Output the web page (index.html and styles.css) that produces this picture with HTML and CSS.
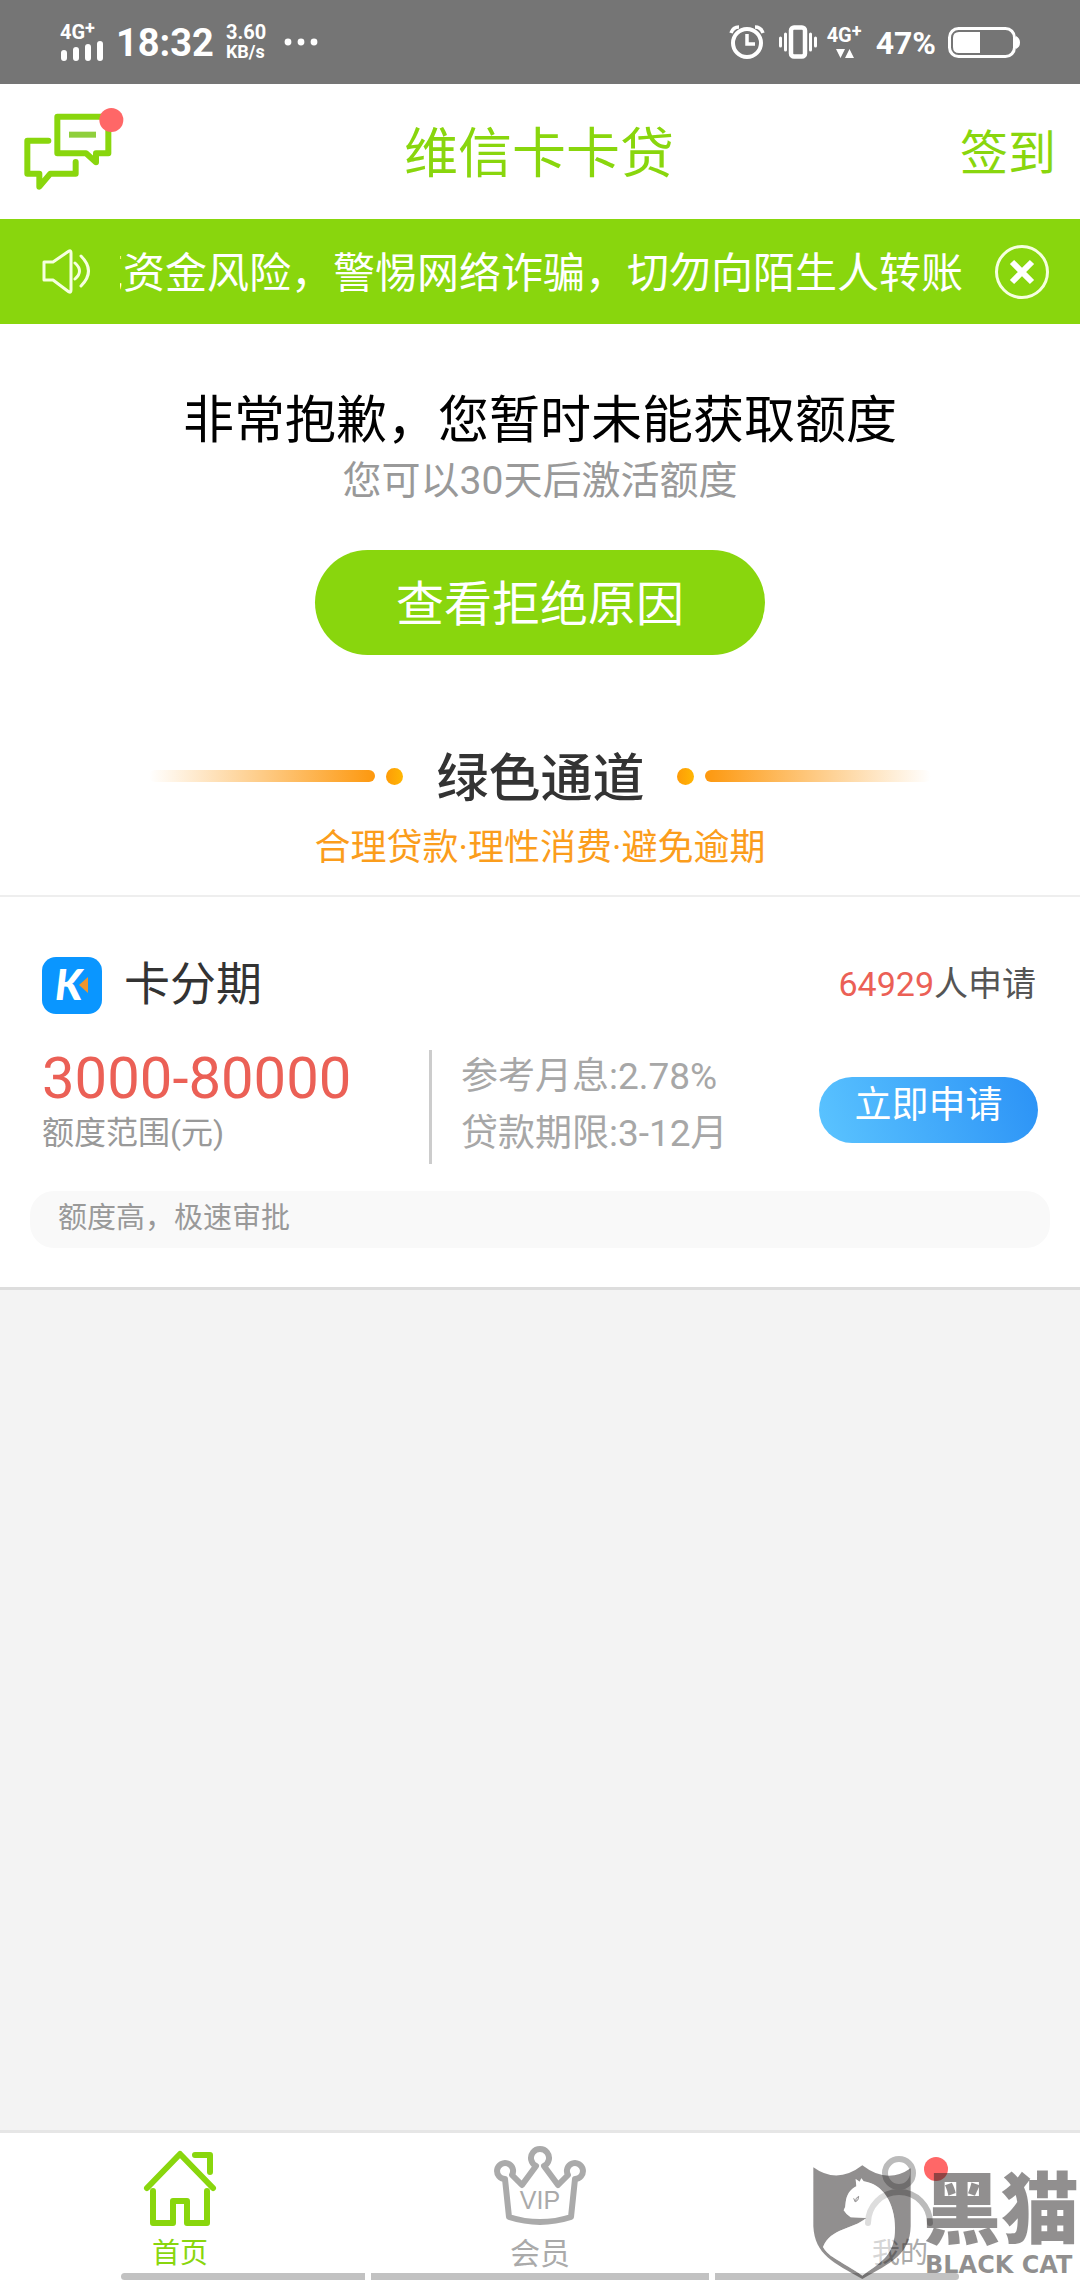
FILE: index.html
```html
<!DOCTYPE html>
<html lang="zh-CN">
<head>
<meta charset="utf-8">
<meta name="viewport" content="width=device-width, initial-scale=1">
<title>维信卡卡贷</title>
<link rel="stylesheet" href="styles.css">
</head>
<body>
<div class="app">
  <div class="status">
    <div class="status-side">
      <div class="signal">
        <span class="net">4G<sup>+</sup></span>
        <svg width="43" height="20" viewBox="0 0 43 20" stroke="#fff" stroke-width="6" stroke-linecap="round"><path d="M4 12v5M16 9v8M28 6v11M40 3v14"/></svg>
      </div>
      <span class="clock">18:32</span>
      <span class="speed"><span>3.60</span><span class="unit">KB/s</span></span>
      <svg class="dots" width="34" height="8" viewBox="0 0 34 8" fill="#fff"><circle cx="4" cy="4" r="3.4"/><circle cx="17" cy="4" r="3.4"/><circle cx="30" cy="4" r="3.4"/></svg>
    </div>
    <div class="status-side">
      <svg width="34" height="34" viewBox="0 0 34 34" fill="none" stroke="#fff" stroke-width="4"><circle cx="17" cy="18" r="14"/><path d="M17 9v10h8" stroke-width="3.5"/><path d="M1 8Q3 2 9 2M33 8Q31 2 25 2" stroke-width="3.5"/></svg>
      <svg class="vibrate" width="38" height="34" viewBox="0 0 38 34" fill="none" stroke="#fff" stroke-width="3" stroke-linecap="round"><rect x="12" y="2.500" width="14" height="29" rx="3" stroke-width="4.500"/><path d="M1.500 13v8M6.500 9v16M31.500 9v16M36.500 13v8"/></svg>
      <div class="signal">
        <span class="net">4G<sup>+</sup></span>
        <svg class="arrows" width="35" height="11" viewBox="0 0 35 11" fill="#fff"><path d="M9 1h9l-4.500 9zM18 10h9l-4.500-9z"/></svg>
      </div>
      <span class="percent">47%</span>
      <svg width="72" height="31" viewBox="0 0 72 31"><rect x="1.500" y="1.500" width="65" height="28" rx="9" fill="none" stroke="#fff" stroke-width="3"/><path d="M32 5H11Q5 5 5 11v9q0 6 6 6h21zM68 9q4 2 4 6.500T68 22z" fill="#fff"/></svg>
    </div>
  </div>

  <header class="header">
    <button class="icon-button messages" aria-label="消息">
      <svg width="104" height="84" viewBox="15 18 312 252" fill="none" stroke="#89d60d" stroke-width="18" stroke-linecap="round" stroke-linejoin="round"><path d="M100 122H37v99h36v39l33-39h76v-35M127 50h153v110h-37v27l-30-27h-86z"/><path d="M162 104h81" stroke="#8fcf3c" stroke-linecap="butt"/><circle cx="289" cy="60" r="36" fill="#ff6767" stroke="none"/></svg>
    </button>
    <h1 class="title">维信卡卡贷</h1>
    <a class="checkin" href="#">签到</a>
  </header>

  <div class="notice">
    <svg width="48" height="45" viewBox="0 0 48 45" fill="none" stroke="#f6ffe0" stroke-width="3" stroke-linecap="round" stroke-linejoin="round"><path d="M2 13h9L27 2q2-1 2 2v37q0 3-2 2L11 31H2zM33 14q9 8 0 16M39 7q15 15 0 30"/></svg>
    <p class="notice-text"><span>范资金风险，警惕网络诈骗，切勿向陌生人转账</span></p>
    <button class="icon-button" aria-label="关闭">
      <svg width="54" height="54" viewBox="0 0 54 54" fill="none" stroke="#f6ffe0" stroke-width="3"><circle cx="27" cy="27" r="25.500"/><path d="M17 17l20 20M37 17L17 37" stroke="#fff" stroke-width="6"/></svg>
    </button>
  </div>

  <main class="main">
    <section class="hero">
      <h2 class="hero-title">非常抱歉，您暂时未能获取额度</h2>
      <p class="hero-sub">您可以30天后激活额度</p>
      <button class="reason">查看拒绝原因</button>
      <div class="channel">
        <span class="rule"></span>
        <h2 class="channel-title">绿色通道</h2>
        <span class="rule rule-right"></span>
      </div>
      <p class="channel-sub">合理贷款·理性消费·避免逾期</p>
    </section>

    <article class="card">
      <div class="card-head">
        <svg width="60" height="57" viewBox="0 0 60 57"><rect width="60" height="57" rx="14" fill="#0a96ff"/><text x="13" y="43" class="logo-letter">K</text><path d="M46 20v16l-9-8z" fill="#ee952f"/></svg>
        <h3 class="card-name">卡分期</h3>
        <p class="applied"><span class="applied-count">64929</span>人申请</p>
      </div>
      <div class="card-body">
        <div>
          <p class="amount">3000-80000</p>
          <p class="amount-label">额度范围(元)</p>
        </div>
        <div class="terms">
          <p>参考月息:2.78%</p>
          <p>贷款期限:3-12月</p>
        </div>
        <button class="apply">立即申请</button>
      </div>
      <p class="tag">额度高，极速审批</p>
    </article>
  </main>

  <nav class="tabs">
    <a class="tab tab-active" href="#">
      <svg width="74" height="76" viewBox="0 0 74 76" fill="none" stroke="#89d60d" stroke-width="6" stroke-linecap="round" stroke-linejoin="round"><path d="M4 38L37 4l33 34M52 5h15v17M10 41v32h20V51h14v22h20V41"/></svg>
      <span>首页</span>
    </a>
    <a class="tab" href="#">
      <svg width="94" height="82" viewBox="0 0 94 82" fill="none" stroke="#aaa" stroke-width="6" stroke-linejoin="round"><path d="M12 35A8 8 0 1 1 19 31L29 41 43 22A9 9 0 1 1 51 22L65 41 75 31A8 8 0 1 1 82 35L78 73Q47 83 16 73z"/><text x="47" y="65" text-anchor="middle" class="vip">VIP</text></svg>
      <span class="tab-wide">会员</span>
    </a>
    <a class="tab" href="#">
      <svg width="74" height="76" viewBox="0 0 74 76" fill="none" stroke="#bbb" stroke-width="6" stroke-linecap="round"><circle cx="36" cy="23" r="14"/><path d="M5 73a31 31 0 0 1 62 0"/><circle cx="73" cy="19" r="12" fill="#ff6767" stroke="none"/></svg>
      <span>我的</span>
    </a>
    <div class="gesture"><i></i><i></i><i></i></div>
    <div class="watermark">
      <svg width="98" height="114" viewBox="92 136 294 342"><path fill="#231f20" fill-opacity=".5" fill-rule="evenodd" d="M93 143Q165 195 240 137Q315 195 385 146V320C383 405 325 430 240 478C155 430 97 405 93 320ZM220 178L232 186 237 176 244 185C300 192 338 250 338 325C338 405 300 425 240 468C180 425 140 415 122 382C145 325 210 330 252 295L205 293Q192 285 184 272Q190 262 190 248C193 225 203 210 222 200Z"/><path fill="#fff" fill-opacity=".5" d="M220 178L232 186 237 176 244 185C300 192 338 250 338 325C338 405 300 425 240 468C180 425 140 415 122 382C145 325 210 330 252 295L205 293Q192 285 184 272Q190 262 190 248C193 225 203 210 222 200Z"/><path d="M214 236l5 11M229 230q0 13-9 16q-2-11 9-16" fill="none" stroke="#8f8d8e" stroke-width="3"/></svg>
      <div class="brand"><span class="brand-cn">黑猫</span><span class="brand-en">BLACK CAT</span></div>
    </div>
  </nav>
</div>
</body>
</html>
```
FILE: styles.css
```css
* { box-sizing: border-box; margin: 0; padding: 0; }
body { font-family: Roboto, "Noto Sans CJK SC", sans-serif; background: #fff; }
h1, h2, h3 { font-weight: 400; }
button { border: 0; background: none; color: inherit; font: inherit; cursor: pointer; }
a { color: inherit; text-decoration: none; }
svg { display: block; flex: none; overflow: visible; }

.app { display: flex; flex-direction: column; min-height: 100vh; overflow: hidden; }

.status { display: flex; justify-content: space-between; height: 84px; padding: 0 60px; background: #757575; color: #fff; font-weight: 700; }
.status-side { display: flex; align-items: center; }
.signal { display: flex; flex-direction: column; }
.net { font-size: 20px; line-height: 18px; white-space: nowrap; }
.net sup { font-size: 18px; line-height: 1px; vertical-align: 5px; }
.arrows { margin-top: 4px; }
.clock { margin-left: 13px; padding-top: 2px; font-size: 38px; line-height: 44px; }
.speed { display: flex; flex-direction: column; margin-left: 12px; font-size: 20px; line-height: 20px; }
.unit { font-size: 18px; }
.dots { margin-left: 18px; }
.vibrate { margin: 0 10px 0 15px; }
.percent { margin: 0 12px 0 14px; padding-top: 2px; font-size: 32px; line-height: 36px; }

.header { display: grid; grid-template-columns: 1fr auto 1fr; align-items: center; height: 135px; padding: 4px 24px 0 20px; color: #89d60d; }
.icon-button { display: flex; }
.messages { padding-bottom: 12px; }
.title { padding: 2px 0 0 2px; font-size: 54px; line-height: 60px; }
.checkin { justify-self: end; font-size: 48px; line-height: 60px; }

.notice { display: flex; align-items: center; height: 105px; padding: 0 31px 0 42px; background: #89d60d; color: #fff; }
.notice-text { display: flex; flex: 1; justify-content: flex-end; margin: 0 32px 0 30px; padding-top: 4px; overflow: hidden; white-space: nowrap; font-size: 42px; line-height: 60px; }

.main { flex: 1; background: #f3f3f3; }
.hero { display: flex; flex-direction: column; align-items: center; padding: 67px 24px 29px; border-bottom: 2px solid #eee; background: #fff; }
.hero-title { color: #000; font-size: 51px; line-height: 60px; }
.hero-sub { color: #999; font-size: 39px; line-height: 60px; }
.reason { width: 450px; height: 105px; margin-top: 39px; padding-bottom: 5px; border-radius: 53px; background: #89d60d; color: #fff; font-size: 48px; }
.channel { display: flex; align-items: center; margin-top: 93px; }
.channel-title { margin: 0 32px 0 33px; padding-top: 2px; color: #333; font-size: 52px; font-weight: 500; line-height: 60px; }
.rule { display: flex; align-items: center; gap: 11px; padding-bottom: 6px; }
.rule::before { content: ""; width: 226px; height: 12px; border-radius: 6px; background: linear-gradient(to right, rgba(253, 152, 14, 0), #fd980e); }
.rule::after { content: ""; width: 17px; height: 17px; border-radius: 50%; background: linear-gradient(to right, #fe9b08, #ffb703); }
.rule-right { flex-direction: row-reverse; }
.rule-right::before { background: linear-gradient(to left, rgba(253, 152, 14, 0), #fd980e); }
.channel-sub { margin-top: 20px; color: #fb9d1c; font-size: 36px; line-height: 36px; }

.card { padding: 60px 42px 39px; border-bottom: 3px solid #ddd; background: #fff; }
.card-head { display: flex; align-items: flex-start; line-height: 54px; }
.logo-letter { fill: #fff; font: italic 900 42px Lato, sans-serif; }
.card-name { margin-left: 22px; color: #333; font-size: 46px; }
.applied { margin-left: auto; padding-right: 2px; color: #555; font-size: 34px; }
.applied-count { color: #eb6056; }
.card-body { display: grid; grid-template-columns: 387fr 390fr 219px; margin-top: 36px; }
.amount { color: #eb6056; font-size: 58px; line-height: 56px; }
.amount-label { color: #999; font-size: 32px; line-height: 54px; }
.terms { padding: 0 0 3px 29px; border-left: 3px solid #ccc; color: #a7a7a7; font-size: 37px; line-height: 54px; }
.terms p + p { padding-top: 3px; }
.apply { align-self: center; height: 66px; margin-top: 6px; padding-bottom: 8px; border-radius: 33px; background: linear-gradient(70deg, #5bc4ff, #2b92f6); color: #fff; font-size: 37px; line-height: 54px; }
.tag { margin: 27px -12px 0; padding: 0 28px 2px; border-radius: 24px; background: #f9f9f9; color: #999; font-size: 29px; line-height: 55px; }

.tabs { position: relative; display: grid; grid-template-columns: repeat(3, 1fr); height: 150px; border-top: 3px solid #e6e6e6; background: #fff; }
.tab { display: flex; flex-direction: column; align-items: center; justify-content: flex-end; padding-bottom: 8px; color: #aaa; font-size: 28px; line-height: 36px; gap: 10px; }
.tab-active { color: #89d60d; }
.tab-wide { font-size: 30px; }
.vip { fill: #aaa; stroke: none; font: 25px "Liberation Sans", sans-serif; }
.gesture { position: absolute; right: 121px; bottom: 0; left: 121px; display: flex; gap: 6px; }
.gesture i { flex: 1 1 338px; height: 7px; background: #c2c2c2; }
.gesture i:first-child { flex-basis: 244px; border-radius: 4px 0 0 4px; }
.gesture i:last-child { flex-basis: 244px; border-radius: 0 4px 4px 0; }
.watermark { position: absolute; right: 1px; bottom: 1px; display: flex; align-items: flex-end; gap: 12px; color: rgba(35, 31, 32, .5); pointer-events: none; }
.brand { display: flex; flex-direction: column; }
.brand-cn { font-size: 78px; font-weight: 900; line-height: 78px; }
.brand-en { padding-left: 2px; font: 700 24px/28px "DejaVu Sans", sans-serif; }
```
